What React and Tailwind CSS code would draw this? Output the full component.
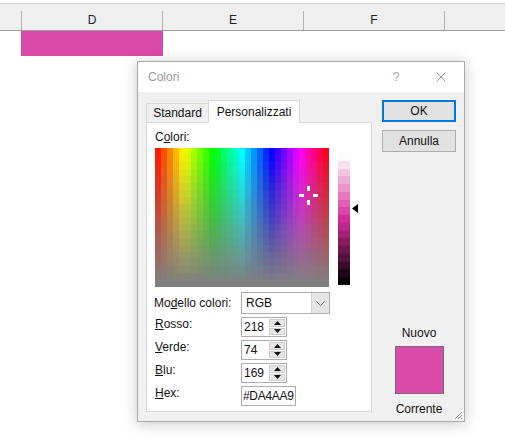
import React from "react";

const PINK = "#DA4AA9";

function Spectrum() {
  const cols = 29;
  const rows = 20;
  const w = 174;
  const h = 139;
  const cells = [];
  for (let r = 0; r < rows; r++) {
    const y0 = Math.round((r * h) / rows);
    const y1 = Math.round(((r + 1) * h) / rows);
    const sat = 100 * (1 - r / (rows - 1));
    for (let c = 0; c < cols; c++) {
      const hue = ((c + 0.5) / cols) * 360;
      cells.push(
        <rect key={r + "-" + c} x={c * 6} y={y0} width={6} height={y1 - y0} fill={`hsl(${hue},${sat}%,50%)`} />
      );
    }
  }
  return (
    <svg width={w} height={h} shapeRendering="crispEdges" className="block">
      {cells}
      {/* crosshair */}
      <rect x={152} y={38} width={3} height={5} fill="#fff" />
      <rect x={152} y={52} width={3} height={5} fill="#fff" />
      <rect x={144} y={46} width={5} height={3} fill="#fff" />
      <rect x={158} y={46} width={5} height={3} fill="#fff" />
    </svg>
  );
}

function LumBar() {
  const rows = 17;
  const h = 132;
  const cells = [];
  for (let r = 0; r < rows; r++) {
    const y0 = Math.round((r * h) / rows);
    const y1 = Math.round(((r + 1) * h) / rows);
    const lum = 100 * (1 - (r + 0.2) / (rows - 0.6));
    cells.push(<rect key={r} x={0} y={y0} width={12} height={y1 - y0} fill={`hsl(320,66%,${Math.max(lum, 0)}%)`} />);
  }
  return (
    <svg width={12} height={h} shapeRendering="crispEdges" className="block">
      {cells}
    </svg>
  );
}

function Spin() {
  return (
    <div className="ml-auto mr-px my-px w-[16px] flex flex-col gap-px">
      <div className="flex-1 bg-[#e6e6e6] border border-[#cfcfcf] flex items-center justify-center">
        <svg width="7" height="4"><polygon points="3.5,0 7,4 0,4" fill="#111" /></svg>
      </div>
      <div className="flex-1 bg-[#e6e6e6] border border-[#cfcfcf] flex items-center justify-center">
        <svg width="7" height="4"><polygon points="0,0 7,0 3.5,4" fill="#111" /></svg>
      </div>
    </div>
  );
}

function NumberRow({ label, value }) {
  return (
    <div className="flex items-start h-[20px] mt-[3px]">
      <div className="w-[86px] leading-[15px]">{label}</div>
      <div className="w-[46px] h-[20px] flex border border-[#adadad] bg-white">
        <span className="pl-[2px] leading-[18px]">{value}</span>
        <Spin />
      </div>
    </div>
  );
}

function Button({ children, active }) {
  return (
    <div
      className={
        active
          ? "h-[22px] w-[74px] flex items-center justify-center bg-[#e1e1e1] border-2 border-[#0078d7]"
          : "h-[22px] w-[74px] flex items-center justify-center bg-[#e1e1e1] border border-[#adadad]"
      }
    >
      {children}
    </div>
  );
}

export default function App() {
  return (
    <div className="relative w-[505px] h-[441px] bg-white overflow-hidden text-[12px] text-[#111] font-['Liberation_Sans',Arial,sans-serif]">
      {/* sheet column headers */}
      <div className="h-[3px] bg-white" />
      <div className="flex h-[28px] bg-[#efefef] border-t border-b border-t-[#d4d4d4] border-b-[#9e9e9e]">
        <div className="w-[21px]" />
        {["D", "E", "F", ""].map((c, i) => (
          <div key={i} className={i === 3 ? "flex-1 flex" : "w-[141px] flex"}>
            <div className="w-px h-[19px] self-end bg-[#b3b3b3]" />
            <div className="flex-1 text-center pt-[9px] leading-[15px] text-[#222]">{c}</div>
          </div>
        ))}
      </div>
      <div className="ml-[21px] w-[142px] h-[25px] bg-[#DA4AA9]" />

      {/* dialog */}
      <div className="absolute left-[137px] top-[61px] w-[328px] h-[361px] border border-[#a9a9a9] bg-[#f0f0f0] shadow-[0_2px_14px_rgba(0,0,0,0.22)] flex flex-col">
        <div className="h-[30px] bg-white flex items-center pl-[10px] text-[#9b9b9b]">
          <span>Colori</span>
          <span className="ml-auto w-[14px] text-center text-[13px] text-[#a8a8a8]">?</span>
          <svg className="ml-[33px] mr-[18px]" width="10" height="10">
            <path d="M0.5 0.5 L9.5 9.5 M9.5 0.5 L0.5 9.5" stroke="#9b9b9b" strokeWidth="1" />
          </svg>
        </div>

        <div className="flex-1 flex pl-[8px] pt-[8px] pr-[7px]">
          {/* left: tabs + panel */}
          <div className="w-[226px] flex flex-col pb-[9px]">
            <div className="flex items-end h-[22px]">
              <div className="h-[19px] w-[62px] border border-b-0 border-r-0 border-[#d9d9d9] flex items-center justify-center">
                Standard
              </div>
              <div className="relative z-10 -mb-px h-[23px] w-[92px] bg-white border border-b-0 border-[#d9d9d9] flex items-start justify-center pt-[4px] leading-[15px]">
                Personalizzati
              </div>
            </div>
            <div className="flex-1 bg-white border border-[#d9d9d9] pl-[8px] pt-[7px]">
              <div className="leading-[15px]">
                C<u>o</u>lori:
              </div>
              <div className="flex mt-[3px]">
                <Spectrum />
                <div className="ml-[9px] mt-[5px]">
                  <LumBar />
                </div>
                <svg className="ml-[2px] mt-[56px]" width="6" height="9">
                  <polygon points="0,4.5 6,0 6,9" fill="#000" />
                </svg>
              </div>

              <div className="flex items-center h-[22px] mt-[5px] -ml-px">
                <div className="w-[87px] leading-[15px]">
                  Mo<u>d</u>ello colori:
                </div>
                <div className="w-[89px] h-[22px] flex border border-[#adadad] bg-white">
                  <span className="pl-[4px] leading-[20px]">RGB</span>
                  <div className="ml-auto w-[18px] bg-[#e5e5e5] border-l border-[#cfcfcf] flex items-center justify-center">
                    <svg width="9" height="5">
                      <path d="M0.5 0.5 L4.5 4.5 L8.5 0.5" stroke="#777" fill="none" strokeWidth="1" />
                    </svg>
                  </div>
                </div>
              </div>

              <NumberRow label={<><u>R</u>osso:</>} value="218" />
              <NumberRow label={<><u>V</u>erde:</>} value="74" />
              <NumberRow label={<><u>B</u>lu:</>} value="169" />
              <div className="flex items-start h-[20px] mt-[3px]">
                <div className="w-[86px] leading-[15px]">
                  <u>H</u>ex:
                </div>
                <div className="w-[55px] h-[20px] border border-[#adadad] bg-white pl-px leading-[18px] tracking-[-0.3px] whitespace-nowrap overflow-hidden">
                  #DA4AA9
                </div>
              </div>
            </div>
          </div>

          {/* right: buttons + preview */}
          <div className="ml-[10px] w-[74px] flex flex-col pb-[4px]">
            <Button active>OK</Button>
            <div className="mt-[8px]">
              <Button>Annulla</Button>
            </div>
            <div className="mt-auto flex flex-col items-center">
              <div className="leading-[15px]">Nuovo</div>
              <div className="mt-[5px] w-[49px] h-[48px] border border-[#6e6e6e]" style={{ backgroundColor: PINK }} />
              <div className="mt-[8px] leading-[15px]">Corrente</div>
            </div>
          </div>
        </div>

        {/* resize grip */}
        <svg className="absolute right-px bottom-px" width="10" height="10">
          <path d="M9 2 L2 9 M9 5 L5 9 M9 8 L8 9" stroke="#a0a0a0" strokeWidth="1" />
        </svg>
      </div>
    </div>
  );
}
